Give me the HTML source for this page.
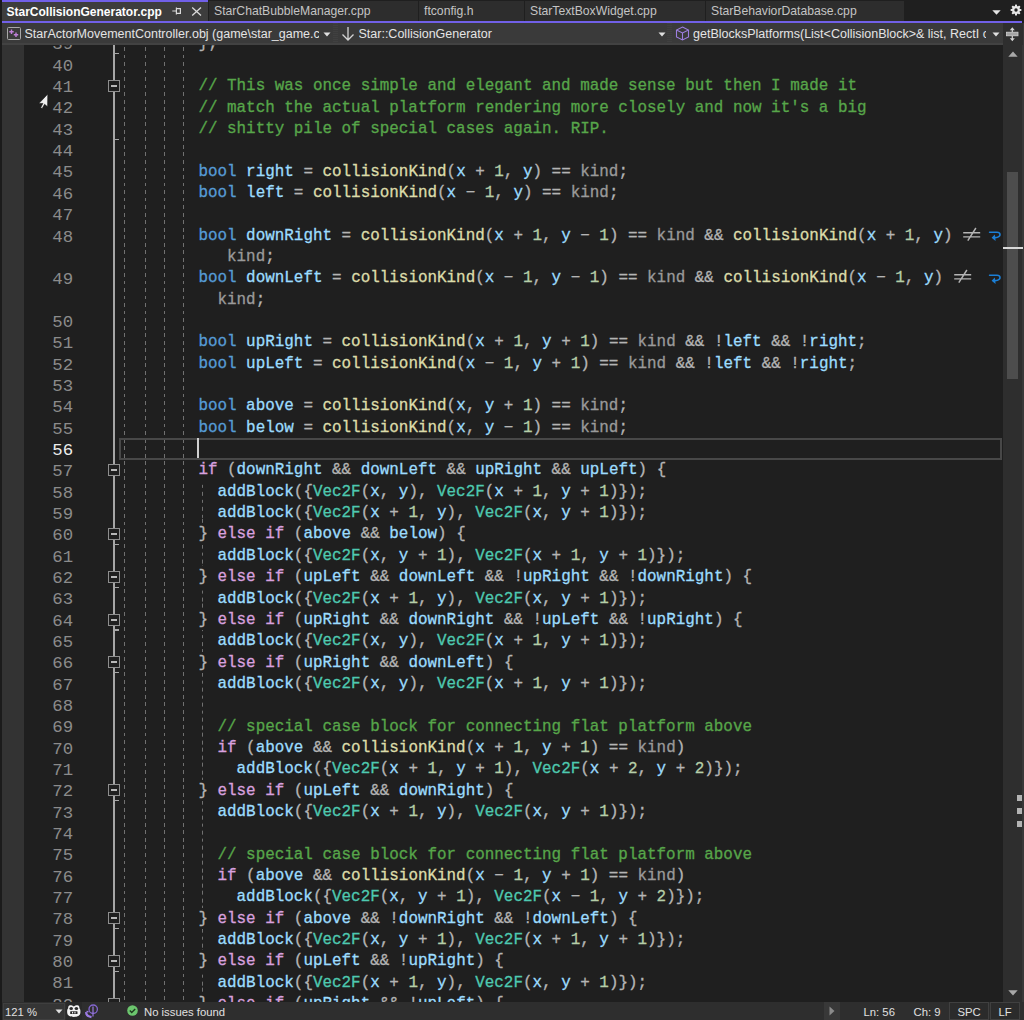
<!DOCTYPE html>
<html><head><meta charset="utf-8">
<style>
*{margin:0;padding:0;box-sizing:border-box}
html,body{width:1024px;height:1020px;overflow:hidden;background:#1f1f1f;font-family:"Liberation Sans",sans-serif;position:relative}
.a{position:absolute}
.tab{position:absolute;top:1px;height:20px;background:#2d2d2d;color:#c4c4c4;font-size:12.2px;line-height:21px;padding-left:5px;white-space:nowrap;overflow:hidden}
.tab.act{top:0;height:21px;background:#3d3d3d;color:#fff;font-weight:bold;font-size:12px;border-top:2px solid #7160e8;line-height:20px;padding-left:4.5px}
.nt{position:absolute;top:23px;line-height:23px;height:20px;font-size:12.5px;color:#e4e4e4;white-space:nowrap;overflow:hidden}
.row{position:absolute;left:0;height:21.34px;width:1003px;font-family:"Liberation Mono",monospace;font-size:15.92px;-webkit-text-stroke:0.3px currentColor;line-height:21.34px;white-space:pre}
.ln{position:absolute;left:0;top:1.8px;font-size:17.4px;width:73.2px;text-align:right;color:#8b8b8b;-webkit-text-stroke:0}
.ln.cur{color:#ededed}
.code{position:absolute;left:122px;top:1px;color:#dcdcdc}
.kw{color:#569cd6}.ctl{color:#d8a0df}.var{color:#9cdcfe}.fn{color:#dcdcaa}.ty{color:#4ec9b0}.par{color:#9a9a9a}.num{color:#b5cea8}.op{color:#b4b4b4}
.lig{display:inline-block;width:19.1px;height:21px;position:relative;vertical-align:top}
.guide{position:absolute;width:1px;background:repeating-linear-gradient(to bottom,#707070 0,#707070 3.8px,transparent 3.8px,transparent 7.533px)}
.fbox{position:absolute;left:108px;width:11.5px;height:12px;border:1.2px solid #8e8e8e;background:#1f1f1f}
.fbox:after{content:"";position:absolute;left:1.8px;top:4px;width:6px;height:2px;background:#b8b8b8}
.tick{position:absolute;left:114px;width:5px;height:1.3px;background:#a6a6a6}
.st{position:absolute;top:1002px;line-height:20px;height:18px;font-size:11.3px;color:#e0e0e0;white-space:nowrap}
</style></head><body>
<!-- tab strip -->
<div class="tab act" style="left:2px;width:206px">StarCollisionGenerator.cpp</div>
<svg class="a" style="left:170px;top:5px" width="13" height="12" viewBox="170 5 13 12"><path d="M172.3 11H176.3M176.4 7.5V14.6M176.4 8.6H180.4V13.4H176.4" fill="none" stroke="#dadada" stroke-width="1.2"/></svg>
<svg class="a" style="left:190px;top:6px" width="13" height="12" viewBox="190 6 13 12"><path d="M192.2 7.6L201 15.6M201 7.6L192.2 15.6" stroke="#dadada" stroke-width="1.3"/></svg>
<div class="tab" style="left:209px;width:209px">StarChatBubbleManager.cpp</div>
<div class="tab" style="left:419px;width:105px">ftconfig.h</div>
<div class="tab" style="left:525px;width:180px">StarTextBoxWidget.cpp</div>
<div class="tab" style="left:706px;width:198px">StarBehaviorDatabase.cpp</div>
<svg class="a" style="left:992px;top:9.5px" width="9" height="5" viewBox="0 0 9 5"><path d="M0.3 0.2H8.7L4.5 4.8Z" fill="#e4e4e4"/></svg>
<svg class="a" style="left:1009.6px;top:4.1px" width="12" height="12" viewBox="0 0 12 12"><g fill="#e6e6e6"><rect x="5" y="0.6" width="2" height="10.8" rx="0.5"/><rect x="5" y="0.6" width="2" height="10.8" rx="0.5" transform="rotate(45 6 6)"/><rect x="5" y="0.6" width="2" height="10.8" rx="0.5" transform="rotate(90 6 6)"/><rect x="5" y="0.6" width="2" height="10.8" rx="0.5" transform="rotate(135 6 6)"/><circle cx="6" cy="6" r="3.9"/></g><circle cx="6" cy="6" r="1.7" fill="#1f1f1f"/></svg>
<div class="a" style="left:2px;top:21px;width:1020px;height:2px;background:#7160e8"></div>
<!-- nav bar -->
<div class="a" style="left:2px;top:23px;width:1001px;height:20px;background:#3a3a3a"></div>
<div class="a" style="left:2px;top:43px;width:1001px;height:2px;background:#424242"></div>
<div class="a" style="left:1003px;top:23px;width:21px;height:22px;background:#2e2e2e"></div><div class="a" style="left:1022.5px;top:23px;width:1.5px;height:979px;background:#383838"></div>
<svg class="a" style="left:6px;top:26px" width="16" height="15" viewBox="0 0 16 15"><rect x="1.5" y="1.5" width="13" height="12" rx="1" fill="none" stroke="#a8a8a8" stroke-width="1"/><path d="M5.5 3.5V8M3.3 5.8H7.7M10 6.5V11M7.8 8.8H12.2" stroke="#c080d8" stroke-width="1.4"/></svg>
<div class="nt" style="left:24.5px;width:294px">StarActorMovementController.obj (game\star_game.c</div>
<svg class="a" style="left:323px;top:32px" width="8" height="5" viewBox="0 0 8 5"><path d="M0.5 0.5H7.5L4 4.5Z" fill="#e0e0e0"/></svg>
<div class="a" style="left:333px;top:23px;width:5px;height:20px;background:repeating-linear-gradient(to bottom,#404040 0,#404040 1px,#3a3a3a 1px,#3a3a3a 2px)"></div>
<svg class="a" style="left:341px;top:26px" width="14" height="16" viewBox="0 0 14 16"><path d="M7 1V14M1.5 8.5L7 14L12.5 8.5" fill="none" stroke="#d4d4d4" stroke-width="1.3"/></svg>
<div class="nt" style="left:358.5px;width:300px">Star::CollisionGenerator</div>
<svg class="a" style="left:658px;top:32px" width="8" height="5" viewBox="0 0 8 5"><path d="M0.5 0.5H7.5L4 4.5Z" fill="#e0e0e0"/></svg>
<div class="a" style="left:667px;top:23px;width:5px;height:20px;background:repeating-linear-gradient(to bottom,#404040 0,#404040 1px,#3a3a3a 1px,#3a3a3a 2px)"></div>
<svg class="a" style="left:675px;top:26px" width="15" height="15" viewBox="0 0 15 15"><path d="M7.5 1L13.5 4V11L7.5 14L1.5 11V4ZM1.5 4L7.5 7L13.5 4M7.5 7V14" fill="none" stroke="#9d7fe0" stroke-width="1.1"/></svg>
<div class="nt" style="left:693px;width:293px">getBlocksPlatforms(List&lt;CollisionBlock&gt;&amp; list, RectI c</div>
<svg class="a" style="left:992px;top:32px" width="8" height="5" viewBox="0 0 8 5"><path d="M0.5 0.5H7.5L4 4.5Z" fill="#e0e0e0"/></svg>
<svg class="a" style="left:1005px;top:26px" width="15" height="16" viewBox="1005 26 15 16"><rect x="1006.6" y="32.2" width="11.4" height="3.6" fill="#a4a4a4" stroke="#d0d0d0" stroke-width="0.8"/><path d="M1012.3 29V32M1012.3 36V39.5" stroke="#d4d4d4" stroke-width="1.2"/><path d="M1009.8 30.2L1012.3 27.2L1014.8 30.2ZM1009.8 38.3L1012.3 41.2L1014.8 38.3Z" fill="#d4d4d4"/></svg>
<!-- editor -->
<div class="a" style="left:2px;top:45px;width:22px;height:957px;background:#333333"></div>
<div class="a" id="editor" style="left:24px;top:45px;width:979px;height:957px;overflow:hidden;background:#1f1f1f">
<div class="a" style="left:-24px;top:0;width:1003px;height:957px">
<div class="guide" style="left:124.0px;top:2.25px;height:957px"></div>
<div class="guide" style="left:145.0px;top:2.25px;height:957px"></div>
<div class="guide" style="left:163.5px;top:2.25px;height:957px"></div>
<div class="guide" style="left:183.0px;top:2.25px;height:957px"></div>
<div class="guide" style="left:202px;top:435.80px;height:42.68px;background-position:0 -4.17px"></div>
<div class="guide" style="left:202px;top:499.82px;height:21.34px;background-position:0 -0.39px"></div>
<div class="guide" style="left:202px;top:542.50px;height:21.34px;background-position:0 -5.41px"></div>
<div class="guide" style="left:202px;top:585.18px;height:21.34px;background-position:0 -2.89px"></div>
<div class="guide" style="left:202px;top:627.86px;height:106.70px;background-position:0 -0.37px"></div>
<div class="guide" style="left:202px;top:755.90px;height:106.70px;background-position:0 -0.35px"></div>
<div class="guide" style="left:202px;top:883.94px;height:21.34px;background-position:0 -0.33px"></div>
<div class="guide" style="left:202px;top:926.62px;height:21.34px;background-position:0 -5.34px"></div>
<div class="a" style="left:113px;top:0;width:1.6px;height:957px;background:#a6a6a6"></div>
<div class="a" style="left:119.2px;top:393.12px;width:883px;height:21.4px;border:2px solid #484848"></div>
<div class="a" style="left:197.2px;top:393.12px;width:2px;height:19.8px;background:#cfcfcf"></div>
<div class="fbox" style="top:35.01px"></div>
<div class="fbox" style="top:419.13px"></div>
<div class="fbox" style="top:483.15px"></div>
<div class="fbox" style="top:525.83px"></div>
<div class="fbox" style="top:568.51px"></div>
<div class="fbox" style="top:611.19px"></div>
<div class="fbox" style="top:739.23px"></div>
<div class="fbox" style="top:867.27px"></div>
<div class="fbox" style="top:909.95px"></div>
<div class="fbox" style="top:952.63px"></div>
<div class="tick" style="top:7.80px"></div>
<div class="tick" style="top:93.56px"></div>
<div class="tick" style="top:499.02px"></div>
<div class="tick" style="top:541.70px"></div>
<div class="tick" style="top:584.38px"></div>
<div class="tick" style="top:627.06px"></div>
<div class="tick" style="top:755.10px"></div>
<div class="tick" style="top:883.14px"></div>
<div class="tick" style="top:925.82px"></div>
<svg class="a" style="left:986px;top:183.00px" width="18" height="16" viewBox="986 228 18 16"><path d="M989.6 232.3H997C1000.6 232.3 1001.2 236.4 997.4 237.2L995.2 237.6" fill="none" stroke="#1b7fd6" stroke-width="1.6" stroke-linecap="round"/><path d="M994.8 234.4L991.6 237.7L995.6 240.9Z" fill="#1b7fd6"/></svg>
<svg class="a" style="left:986px;top:225.68px" width="18" height="16" viewBox="986 228 18 16"><path d="M989.6 232.3H997C1000.6 232.3 1001.2 236.4 997.4 237.2L995.2 237.6" fill="none" stroke="#1b7fd6" stroke-width="1.6" stroke-linecap="round"/><path d="M994.8 234.4L991.6 237.7L995.6 240.9Z" fill="#1b7fd6"/></svg>
<div class="row" style="top:-12.34px"><span class="ln">39</span><span class="code">        <span class="op">}</span><span class="op">;</span></span></div>
<div class="row" style="top:9.00px"><span class="ln">40</span><span class="code"></span></div>
<div class="row" style="top:30.34px"><span class="ln">41</span><span class="code">        <span style="color:#57a64a">// This was once simple and elegant and made sense but then I made it</span></span></div>
<div class="row" style="top:51.68px"><span class="ln">42</span><span class="code">        <span style="color:#57a64a">// match the actual platform rendering more closely and now it&#x27;s a big</span></span></div>
<div class="row" style="top:73.02px"><span class="ln">43</span><span class="code">        <span style="color:#57a64a">// shitty pile of special cases again. RIP.</span></span></div>
<div class="row" style="top:94.36px"><span class="ln">44</span><span class="code"></span></div>
<div class="row" style="top:115.70px"><span class="ln">45</span><span class="code">        <span class="kw">bool</span> <span class="var">right</span> <span class="op">=</span> <span class="fn">collisionKind</span><span class="op">(</span><span class="var">x</span> <span class="op">+</span> <span class="num">1</span><span class="op">,</span> <span class="var">y</span><span class="op">)</span> <span class="op">==</span> <span class="par">kind</span><span class="op">;</span></span></div>
<div class="row" style="top:137.04px"><span class="ln">46</span><span class="code">        <span class="kw">bool</span> <span class="var">left</span> <span class="op">=</span> <span class="fn">collisionKind</span><span class="op">(</span><span class="var">x</span> <span class="op">&#8722;</span> <span class="num">1</span><span class="op">,</span> <span class="var">y</span><span class="op">)</span> <span class="op">==</span> <span class="par">kind</span><span class="op">;</span></span></div>
<div class="row" style="top:158.38px"><span class="ln">47</span><span class="code"></span></div>
<div class="row" style="top:179.72px"><span class="ln">48</span><span class="code">        <span class="kw">bool</span> <span class="var">downRight</span> <span class="op">=</span> <span class="fn">collisionKind</span><span class="op">(</span><span class="var">x</span> <span class="op">+</span> <span class="num">1</span><span class="op">,</span> <span class="var">y</span> <span class="op">&#8722;</span> <span class="num">1</span><span class="op">)</span> <span class="op">==</span> <span class="par">kind</span> <span class="op">&amp;&amp;</span> <span class="fn">collisionKind</span><span class="op">(</span><span class="var">x</span> <span class="op">+</span> <span class="num">1</span><span class="op">,</span> <span class="var">y</span><span class="op">)</span> <span class="lig"><svg width="19.1" height="21" viewBox="0 0 19.1 21" style="position:absolute;left:0;top:-1px"><path d="M1.2 7.8H18.2M1.2 11.9H18.2M13.9 3.0L5.8 15.6" fill="none" stroke="#b4b4b4" stroke-width="1.45"/></svg></span> </span></div>
<div class="row" style="top:201.06px"><span class="ln"></span><span class="code">           <span class="par">kind</span><span class="op">;</span></span></div>
<div class="row" style="top:222.40px"><span class="ln">49</span><span class="code">        <span class="kw">bool</span> <span class="var">downLeft</span> <span class="op">=</span> <span class="fn">collisionKind</span><span class="op">(</span><span class="var">x</span> <span class="op">&#8722;</span> <span class="num">1</span><span class="op">,</span> <span class="var">y</span> <span class="op">&#8722;</span> <span class="num">1</span><span class="op">)</span> <span class="op">==</span> <span class="par">kind</span> <span class="op">&amp;&amp;</span> <span class="fn">collisionKind</span><span class="op">(</span><span class="var">x</span> <span class="op">&#8722;</span> <span class="num">1</span><span class="op">,</span> <span class="var">y</span><span class="op">)</span> <span class="lig"><svg width="19.1" height="21" viewBox="0 0 19.1 21" style="position:absolute;left:0;top:-1px"><path d="M1.2 7.8H18.2M1.2 11.9H18.2M13.9 3.0L5.8 15.6" fill="none" stroke="#b4b4b4" stroke-width="1.45"/></svg></span> </span></div>
<div class="row" style="top:243.74px"><span class="ln"></span><span class="code">          <span class="par">kind</span><span class="op">;</span></span></div>
<div class="row" style="top:265.08px"><span class="ln">50</span><span class="code"></span></div>
<div class="row" style="top:286.42px"><span class="ln">51</span><span class="code">        <span class="kw">bool</span> <span class="var">upRight</span> <span class="op">=</span> <span class="fn">collisionKind</span><span class="op">(</span><span class="var">x</span> <span class="op">+</span> <span class="num">1</span><span class="op">,</span> <span class="var">y</span> <span class="op">+</span> <span class="num">1</span><span class="op">)</span> <span class="op">==</span> <span class="par">kind</span> <span class="op">&amp;&amp;</span> <span class="op">!</span><span class="var">left</span> <span class="op">&amp;&amp;</span> <span class="op">!</span><span class="var">right</span><span class="op">;</span></span></div>
<div class="row" style="top:307.76px"><span class="ln">52</span><span class="code">        <span class="kw">bool</span> <span class="var">upLeft</span> <span class="op">=</span> <span class="fn">collisionKind</span><span class="op">(</span><span class="var">x</span> <span class="op">&#8722;</span> <span class="num">1</span><span class="op">,</span> <span class="var">y</span> <span class="op">+</span> <span class="num">1</span><span class="op">)</span> <span class="op">==</span> <span class="par">kind</span> <span class="op">&amp;&amp;</span> <span class="op">!</span><span class="var">left</span> <span class="op">&amp;&amp;</span> <span class="op">!</span><span class="var">right</span><span class="op">;</span></span></div>
<div class="row" style="top:329.10px"><span class="ln">53</span><span class="code"></span></div>
<div class="row" style="top:350.44px"><span class="ln">54</span><span class="code">        <span class="kw">bool</span> <span class="var">above</span> <span class="op">=</span> <span class="fn">collisionKind</span><span class="op">(</span><span class="var">x</span><span class="op">,</span> <span class="var">y</span> <span class="op">+</span> <span class="num">1</span><span class="op">)</span> <span class="op">==</span> <span class="par">kind</span><span class="op">;</span></span></div>
<div class="row" style="top:371.78px"><span class="ln">55</span><span class="code">        <span class="kw">bool</span> <span class="var">below</span> <span class="op">=</span> <span class="fn">collisionKind</span><span class="op">(</span><span class="var">x</span><span class="op">,</span> <span class="var">y</span> <span class="op">&#8722;</span> <span class="num">1</span><span class="op">)</span> <span class="op">==</span> <span class="par">kind</span><span class="op">;</span></span></div>
<div class="row" style="top:393.12px"><span class="ln cur">56</span><span class="code"></span></div>
<div class="row" style="top:414.46px"><span class="ln">57</span><span class="code">        <span class="ctl">if</span> <span class="op">(</span><span class="var">downRight</span> <span class="op">&amp;&amp;</span> <span class="var">downLeft</span> <span class="op">&amp;&amp;</span> <span class="var">upRight</span> <span class="op">&amp;&amp;</span> <span class="var">upLeft</span><span class="op">)</span> <span class="op">{</span></span></div>
<div class="row" style="top:435.80px"><span class="ln">58</span><span class="code">          <span class="var">addBlock</span><span class="op">(</span><span class="op">{</span><span class="ty">Vec2F</span><span class="op">(</span><span class="var">x</span><span class="op">,</span> <span class="var">y</span><span class="op">)</span><span class="op">,</span> <span class="ty">Vec2F</span><span class="op">(</span><span class="var">x</span> <span class="op">+</span> <span class="num">1</span><span class="op">,</span> <span class="var">y</span> <span class="op">+</span> <span class="num">1</span><span class="op">)</span><span class="op">}</span><span class="op">)</span><span class="op">;</span></span></div>
<div class="row" style="top:457.14px"><span class="ln">59</span><span class="code">          <span class="var">addBlock</span><span class="op">(</span><span class="op">{</span><span class="ty">Vec2F</span><span class="op">(</span><span class="var">x</span> <span class="op">+</span> <span class="num">1</span><span class="op">,</span> <span class="var">y</span><span class="op">)</span><span class="op">,</span> <span class="ty">Vec2F</span><span class="op">(</span><span class="var">x</span><span class="op">,</span> <span class="var">y</span> <span class="op">+</span> <span class="num">1</span><span class="op">)</span><span class="op">}</span><span class="op">)</span><span class="op">;</span></span></div>
<div class="row" style="top:478.48px"><span class="ln">60</span><span class="code">        <span class="op">}</span> <span class="ctl">else</span> <span class="ctl">if</span> <span class="op">(</span><span class="var">above</span> <span class="op">&amp;&amp;</span> <span class="var">below</span><span class="op">)</span> <span class="op">{</span></span></div>
<div class="row" style="top:499.82px"><span class="ln">61</span><span class="code">          <span class="var">addBlock</span><span class="op">(</span><span class="op">{</span><span class="ty">Vec2F</span><span class="op">(</span><span class="var">x</span><span class="op">,</span> <span class="var">y</span> <span class="op">+</span> <span class="num">1</span><span class="op">)</span><span class="op">,</span> <span class="ty">Vec2F</span><span class="op">(</span><span class="var">x</span> <span class="op">+</span> <span class="num">1</span><span class="op">,</span> <span class="var">y</span> <span class="op">+</span> <span class="num">1</span><span class="op">)</span><span class="op">}</span><span class="op">)</span><span class="op">;</span></span></div>
<div class="row" style="top:521.16px"><span class="ln">62</span><span class="code">        <span class="op">}</span> <span class="ctl">else</span> <span class="ctl">if</span> <span class="op">(</span><span class="var">upLeft</span> <span class="op">&amp;&amp;</span> <span class="var">downLeft</span> <span class="op">&amp;&amp;</span> <span class="op">!</span><span class="var">upRight</span> <span class="op">&amp;&amp;</span> <span class="op">!</span><span class="var">downRight</span><span class="op">)</span> <span class="op">{</span></span></div>
<div class="row" style="top:542.50px"><span class="ln">63</span><span class="code">          <span class="var">addBlock</span><span class="op">(</span><span class="op">{</span><span class="ty">Vec2F</span><span class="op">(</span><span class="var">x</span> <span class="op">+</span> <span class="num">1</span><span class="op">,</span> <span class="var">y</span><span class="op">)</span><span class="op">,</span> <span class="ty">Vec2F</span><span class="op">(</span><span class="var">x</span><span class="op">,</span> <span class="var">y</span> <span class="op">+</span> <span class="num">1</span><span class="op">)</span><span class="op">}</span><span class="op">)</span><span class="op">;</span></span></div>
<div class="row" style="top:563.84px"><span class="ln">64</span><span class="code">        <span class="op">}</span> <span class="ctl">else</span> <span class="ctl">if</span> <span class="op">(</span><span class="var">upRight</span> <span class="op">&amp;&amp;</span> <span class="var">downRight</span> <span class="op">&amp;&amp;</span> <span class="op">!</span><span class="var">upLeft</span> <span class="op">&amp;&amp;</span> <span class="op">!</span><span class="var">upRight</span><span class="op">)</span> <span class="op">{</span></span></div>
<div class="row" style="top:585.18px"><span class="ln">65</span><span class="code">          <span class="var">addBlock</span><span class="op">(</span><span class="op">{</span><span class="ty">Vec2F</span><span class="op">(</span><span class="var">x</span><span class="op">,</span> <span class="var">y</span><span class="op">)</span><span class="op">,</span> <span class="ty">Vec2F</span><span class="op">(</span><span class="var">x</span> <span class="op">+</span> <span class="num">1</span><span class="op">,</span> <span class="var">y</span> <span class="op">+</span> <span class="num">1</span><span class="op">)</span><span class="op">}</span><span class="op">)</span><span class="op">;</span></span></div>
<div class="row" style="top:606.52px"><span class="ln">66</span><span class="code">        <span class="op">}</span> <span class="ctl">else</span> <span class="ctl">if</span> <span class="op">(</span><span class="var">upRight</span> <span class="op">&amp;&amp;</span> <span class="var">downLeft</span><span class="op">)</span> <span class="op">{</span></span></div>
<div class="row" style="top:627.86px"><span class="ln">67</span><span class="code">          <span class="var">addBlock</span><span class="op">(</span><span class="op">{</span><span class="ty">Vec2F</span><span class="op">(</span><span class="var">x</span><span class="op">,</span> <span class="var">y</span><span class="op">)</span><span class="op">,</span> <span class="ty">Vec2F</span><span class="op">(</span><span class="var">x</span> <span class="op">+</span> <span class="num">1</span><span class="op">,</span> <span class="var">y</span> <span class="op">+</span> <span class="num">1</span><span class="op">)</span><span class="op">}</span><span class="op">)</span><span class="op">;</span></span></div>
<div class="row" style="top:649.20px"><span class="ln">68</span><span class="code"></span></div>
<div class="row" style="top:670.54px"><span class="ln">69</span><span class="code">          <span style="color:#57a64a">// special case block for connecting flat platform above</span></span></div>
<div class="row" style="top:691.88px"><span class="ln">70</span><span class="code">          <span class="ctl">if</span> <span class="op">(</span><span class="var">above</span> <span class="op">&amp;&amp;</span> <span class="fn">collisionKind</span><span class="op">(</span><span class="var">x</span> <span class="op">+</span> <span class="num">1</span><span class="op">,</span> <span class="var">y</span> <span class="op">+</span> <span class="num">1</span><span class="op">)</span> <span class="op">==</span> <span class="par">kind</span><span class="op">)</span></span></div>
<div class="row" style="top:713.22px"><span class="ln">71</span><span class="code">            <span class="var">addBlock</span><span class="op">(</span><span class="op">{</span><span class="ty">Vec2F</span><span class="op">(</span><span class="var">x</span> <span class="op">+</span> <span class="num">1</span><span class="op">,</span> <span class="var">y</span> <span class="op">+</span> <span class="num">1</span><span class="op">)</span><span class="op">,</span> <span class="ty">Vec2F</span><span class="op">(</span><span class="var">x</span> <span class="op">+</span> <span class="num">2</span><span class="op">,</span> <span class="var">y</span> <span class="op">+</span> <span class="num">2</span><span class="op">)</span><span class="op">}</span><span class="op">)</span><span class="op">;</span></span></div>
<div class="row" style="top:734.56px"><span class="ln">72</span><span class="code">        <span class="op">}</span> <span class="ctl">else</span> <span class="ctl">if</span> <span class="op">(</span><span class="var">upLeft</span> <span class="op">&amp;&amp;</span> <span class="var">downRight</span><span class="op">)</span> <span class="op">{</span></span></div>
<div class="row" style="top:755.90px"><span class="ln">73</span><span class="code">          <span class="var">addBlock</span><span class="op">(</span><span class="op">{</span><span class="ty">Vec2F</span><span class="op">(</span><span class="var">x</span> <span class="op">+</span> <span class="num">1</span><span class="op">,</span> <span class="var">y</span><span class="op">)</span><span class="op">,</span> <span class="ty">Vec2F</span><span class="op">(</span><span class="var">x</span><span class="op">,</span> <span class="var">y</span> <span class="op">+</span> <span class="num">1</span><span class="op">)</span><span class="op">}</span><span class="op">)</span><span class="op">;</span></span></div>
<div class="row" style="top:777.24px"><span class="ln">74</span><span class="code"></span></div>
<div class="row" style="top:798.58px"><span class="ln">75</span><span class="code">          <span style="color:#57a64a">// special case block for connecting flat platform above</span></span></div>
<div class="row" style="top:819.92px"><span class="ln">76</span><span class="code">          <span class="ctl">if</span> <span class="op">(</span><span class="var">above</span> <span class="op">&amp;&amp;</span> <span class="fn">collisionKind</span><span class="op">(</span><span class="var">x</span> <span class="op">&#8722;</span> <span class="num">1</span><span class="op">,</span> <span class="var">y</span> <span class="op">+</span> <span class="num">1</span><span class="op">)</span> <span class="op">==</span> <span class="par">kind</span><span class="op">)</span></span></div>
<div class="row" style="top:841.26px"><span class="ln">77</span><span class="code">            <span class="var">addBlock</span><span class="op">(</span><span class="op">{</span><span class="ty">Vec2F</span><span class="op">(</span><span class="var">x</span><span class="op">,</span> <span class="var">y</span> <span class="op">+</span> <span class="num">1</span><span class="op">)</span><span class="op">,</span> <span class="ty">Vec2F</span><span class="op">(</span><span class="var">x</span> <span class="op">&#8722;</span> <span class="num">1</span><span class="op">,</span> <span class="var">y</span> <span class="op">+</span> <span class="num">2</span><span class="op">)</span><span class="op">}</span><span class="op">)</span><span class="op">;</span></span></div>
<div class="row" style="top:862.60px"><span class="ln">78</span><span class="code">        <span class="op">}</span> <span class="ctl">else</span> <span class="ctl">if</span> <span class="op">(</span><span class="var">above</span> <span class="op">&amp;&amp;</span> <span class="op">!</span><span class="var">downRight</span> <span class="op">&amp;&amp;</span> <span class="op">!</span><span class="var">downLeft</span><span class="op">)</span> <span class="op">{</span></span></div>
<div class="row" style="top:883.94px"><span class="ln">79</span><span class="code">          <span class="var">addBlock</span><span class="op">(</span><span class="op">{</span><span class="ty">Vec2F</span><span class="op">(</span><span class="var">x</span><span class="op">,</span> <span class="var">y</span> <span class="op">+</span> <span class="num">1</span><span class="op">)</span><span class="op">,</span> <span class="ty">Vec2F</span><span class="op">(</span><span class="var">x</span> <span class="op">+</span> <span class="num">1</span><span class="op">,</span> <span class="var">y</span> <span class="op">+</span> <span class="num">1</span><span class="op">)</span><span class="op">}</span><span class="op">)</span><span class="op">;</span></span></div>
<div class="row" style="top:905.28px"><span class="ln">80</span><span class="code">        <span class="op">}</span> <span class="ctl">else</span> <span class="ctl">if</span> <span class="op">(</span><span class="var">upLeft</span> <span class="op">&amp;&amp;</span> <span class="op">!</span><span class="var">upRight</span><span class="op">)</span> <span class="op">{</span></span></div>
<div class="row" style="top:926.62px"><span class="ln">81</span><span class="code">          <span class="var">addBlock</span><span class="op">(</span><span class="op">{</span><span class="ty">Vec2F</span><span class="op">(</span><span class="var">x</span> <span class="op">+</span> <span class="num">1</span><span class="op">,</span> <span class="var">y</span><span class="op">)</span><span class="op">,</span> <span class="ty">Vec2F</span><span class="op">(</span><span class="var">x</span><span class="op">,</span> <span class="var">y</span> <span class="op">+</span> <span class="num">1</span><span class="op">)</span><span class="op">}</span><span class="op">)</span><span class="op">;</span></span></div>
<div class="row" style="top:947.96px"><span class="ln">82</span><span class="code">        <span class="op">}</span> <span class="ctl">else</span> <span class="ctl">if</span> <span class="op">(</span><span class="var">upRight</span> <span class="op">&amp;&amp;</span> <span class="op">!</span><span class="var">upLeft</span><span class="op">)</span> <span class="op">{</span></span></div>
</div>
</div>
<!-- vertical scrollbar -->
<div class="a" style="left:1003px;top:45px;width:21px;height:957px;background:#2e2e2e"></div>
<div class="a" style="left:1022px;top:45px;width:2px;height:957px;background:#383838"></div>
<svg class="a" style="left:1008px;top:51px" width="10" height="6" viewBox="0 0 10 6"><path d="M0.3 5.8H9.7L5 0.5Z" fill="#a8a8a8"/></svg>
<div class="a" style="left:1006.5px;top:172px;width:11.5px;height:207px;background:#4d4d4d"></div>
<div class="a" style="left:1003px;top:246.5px;width:19.5px;height:2px;background:#d8d8d8"></div>
<div class="a" style="left:1016.5px;top:795px;width:5px;height:6px;background:#b4b4b4"></div>
<div class="a" style="left:1016.5px;top:808px;width:5px;height:6px;background:#b4b4b4"></div>
<div class="a" style="left:1016.5px;top:821px;width:5px;height:6px;background:#b4b4b4"></div>
<svg class="a" style="left:1008px;top:990px" width="10" height="6" viewBox="0 0 10 6"><path d="M0.3 0.2H9.7L5 5.5Z" fill="#a8a8a8"/></svg>
<!-- status bar -->
<div class="a" style="left:0;top:1002px;width:1024px;height:18px;background:#2e2e2e"></div>
<div class="a" style="left:2.5px;top:1002.5px;width:62.5px;height:17.5px;background:#353535;border:1px solid #3f3f3f"></div>
<div class="st" style="left:5px">121 %</div>
<svg class="a" style="left:55px;top:1009px" width="8" height="5" viewBox="0 0 8 5"><path d="M0.5 0.5H7.5L4 4.5Z" fill="#e0e0e0"/></svg>
<div class="a" style="left:65.5px;top:1002px;width:16px;height:18px;background:#292929"></div>
<svg class="a" style="left:66px;top:1004px" width="16" height="14" viewBox="66 1004 16 14"><path d="M70.2 1005.2C68.6 1005.2 68 1006.6 68.2 1008.3C67.2 1009.2 67 1010.7 67.2 1012.8C67.5 1015.8 70 1016.9 73.8 1016.9C77.6 1016.9 80.1 1015.8 80.4 1012.8C80.6 1010.7 80.4 1009.2 79.4 1008.3C79.6 1006.6 79 1005.2 77.4 1005.2C76 1005.2 74.8 1005.6 73.8 1006.5C72.8 1005.6 71.6 1005.2 70.2 1005.2Z" fill="#f2f2f2"/><ellipse cx="71.2" cy="1008.6" rx="1.8" ry="1.5" fill="#2a2a2a"/><ellipse cx="76.4" cy="1008.6" rx="1.8" ry="1.5" fill="#2a2a2a"/><rect x="70.2" y="1011.2" width="7.3" height="2.9" rx="0.6" fill="#2a2a2a"/><rect x="72" y="1011.8" width="1.1" height="1.7" fill="#f2f2f2"/><rect x="74.4" y="1011.8" width="1.1" height="1.7" fill="#f2f2f2"/></svg>
<svg class="a" style="left:84px;top:1004px" width="15" height="15" viewBox="84 1004 15 15"><circle cx="93.2" cy="1009.2" r="4.2" fill="none" stroke="#8466d0" stroke-width="1.3"/><path d="M93 1006.5V1016.5" stroke="#9a78e0" stroke-width="1.2"/><path d="M86.2 1012.2C86 1014.5 88 1016.5 91.5 1017.2" fill="none" stroke="#9b7ae4" stroke-width="2.2"/><path d="M86.5 1011.5L88.5 1011.8" stroke="#9b7ae4" stroke-width="1.6"/></svg>
<svg class="a" style="left:127px;top:1005px" width="11" height="11" viewBox="0 0 11 11"><circle cx="5.5" cy="5.5" r="5.3" fill="#6cc66e"/><path d="M2.8 5.6L4.7 7.4L8.2 3.9" fill="none" stroke="#1f3a1f" stroke-width="1.4"/></svg>
<div class="st" style="left:144px">No issues found</div>
<div class="a" style="left:824px;top:1002px;width:16px;height:18px;background:#383838"></div>
<svg class="a" style="left:829px;top:1006px" width="6" height="10" viewBox="0 0 6 10"><path d="M0.5 0.5V9.5L5.5 5Z" fill="#8a8a8a"/></svg>
<div class="st" style="left:863.5px">Ln: 56</div>
<div class="st" style="left:913.5px">Ch: 9</div>
<div class="a" style="left:949px;top:1002px;width:40px;height:18px;border:1px solid #404040;background:#2b2b2b"></div>
<div class="st" style="left:957.5px">SPC</div>
<div class="a" style="left:990px;top:1002px;width:30px;height:18px;border:1px solid #404040;background:#2b2b2b"></div>
<div class="st" style="left:998.5px">LF</div>
<div class="a" style="left:0;top:0;width:2px;height:1020px;background:#1b1b1b"></div>
<svg class="a" style="left:37px;top:92px" width="13" height="18" viewBox="37 92 13 18"><path d="M47.8 94L47.6 106.8L44.6 104.3L42.2 108.6L40.6 107.8L42.9 103.4L38.8 103.6Z" fill="#f0f0f0" stroke="#111" stroke-width="0.6"/></svg>
</body></html>
